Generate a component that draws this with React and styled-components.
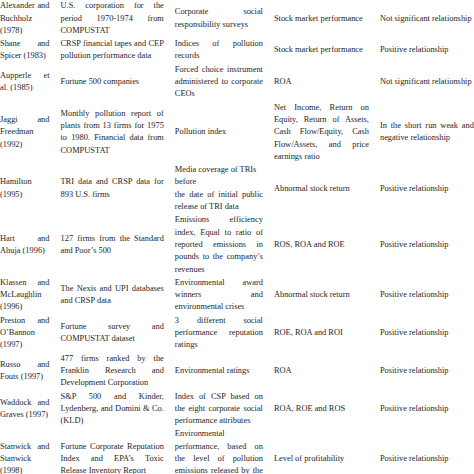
import React from "react";
import styled, { createGlobalStyle } from "styled-components";

const GlobalStyle = createGlobalStyle`
  html, body {
    margin: 0;
    padding: 0;
    background: #ffffff;
  }
  body {
    width: 474px;
    height: 474px;
    overflow: hidden;
  }
`;

const Sheet = styled.div`
  display: grid;
  grid-template-columns: 49.5px 103.35px 88.1px 95px 94px;
  column-gap: 11px;
  row-gap: 1px;
  align-items: center;
  padding-top: 0.3px;
  font-family: "Liberation Serif", "Times New Roman", serif;
  font-size: 8.4px;
  line-height: 12.3px;
  color: #262626;
`;

const Cell = styled.div`
  text-align: justify;
`;

// a line that was set flush on both sides in the source
const Line = styled.span`
  display: block;
  text-align-last: ${(p) => (p.$last ? "auto" : "justify")};
`;

const studies = [
  {
    author: "Alexander and Buchholz (1978)",
    data: { spread: ["U.S. corporation for the", "period 1970-1974 from", "COMPUSTAT"] },
    csp: "Corporate social responsibility surveys",
    cfp: "Stock market performance",
    result: "Not significant relationship",
  },
  {
    author: "Shane and Spicer (1983)",
    data: "CRSP financial tapes and CEP pollution performance data",
    csp: "Indices of pollution records",
    cfp: "Stock market performance",
    result: "Positive relationship",
  },
  {
    author: "Aupperle et al. (1985)",
    data: "Fortune 500 companies",
    csp: "Forced choice instrument administered to corporate CEOs",
    cfp: "ROA",
    result: "Not significant relationship",
  },
  {
    author: "Jaggi and Freedman (1992)",
    data: "Monthly pollution report of plants from 13 firms for 1975 to 1980. Financial data from COMPUSTAT",
    csp: "Pollution index",
    cfp: "Net Income, Return on Equity, Return of Assets, Cash Flow/Equity, Cash Flow/Assets, and price earnings ratio",
    result: "In the short run weak and negative relationship",
  },
  {
    author: "Hamilton (1995)",
    data: "TRI data and CRSP data for 893 U.S. firms",
    csp: ["Media coverage of TRIs", "before", "the date of initial public release of TRI data"],
    cfp: "Abnormal stock return",
    result: "Positive relationship",
  },
  {
    author: "Hart and Ahuja (1996)",
    data: "127 firms from the Standard and Poor\u2019s 500",
    csp: "Emissions efficiency index, Equal to ratio of reported emissions in pounds to the company\u2019s revenues",
    cfp: "ROS, ROA and ROE",
    result: "Positive relationship",
  },
  {
    author: "Klassen and McLaughlin (1996)",
    data: "The Nexis and UPI databases and CRSP data",
    csp: "Environmental award winners and environmental crises",
    cfp: "Abnormal stock return",
    result: "Positive relationship",
  },
  {
    author: "Preston and O\u2019Bannon (1997)",
    data: "Fortune survey and COMPUSTAT dataset",
    csp: "3 different social performance reputation ratings",
    cfp: "ROE, ROA and ROI",
    result: "Positive relationship",
  },
  {
    author: "Russo and Fouts (1997)",
    data: "477 firms ranked by the Franklin Research and Development Corporation",
    csp: "Environmental ratings",
    cfp: "ROA",
    result: "Positive relationship",
  },
  {
    author: "Waddock and Graves (1997)",
    data: "S&P 500 and Kinder, Lydenberg, and Domini & Co. (KLD)",
    csp: "Index of CSP based on the eight corporate social performance attributes",
    cfp: "ROA, ROE and ROS",
    result: "Positive relationship",
  },
  {
    author: "Stanwick and Stanwick (1998)",
    data: "Fortune Corporate Reputation Index and EPA\u2019s Toxic Release Inventory Report",
    csp: "Environmental performance, based on the level of pollution emissions released by the firms",
    cfp: "Level of profitability",
    result: "Positive relationship",
  },
];

// some cells keep the hard line breaks of the source table
function Text({ value }) {
  if (Array.isArray(value)) {
    return value.map((line, i) => (
      <React.Fragment key={i}>
        {i > 0 && <br />}
        {line}
      </React.Fragment>
    ));
  }
  if (value && value.spread) {
    return value.spread.map((line, i) => (
      <Line key={i} $last={i === value.spread.length - 1}>
        {line}
      </Line>
    ));
  }
  return value;
}

export default function App() {
  return (
    <>
      <GlobalStyle />
      <Sheet>
        {studies.map((s) =>
          ["author", "data", "csp", "cfp", "result"].map((k) => (
            <Cell key={s.author + k}>
              <Text value={s[k]} />
            </Cell>
          ))
        )}
      </Sheet>
    </>
  );
}
